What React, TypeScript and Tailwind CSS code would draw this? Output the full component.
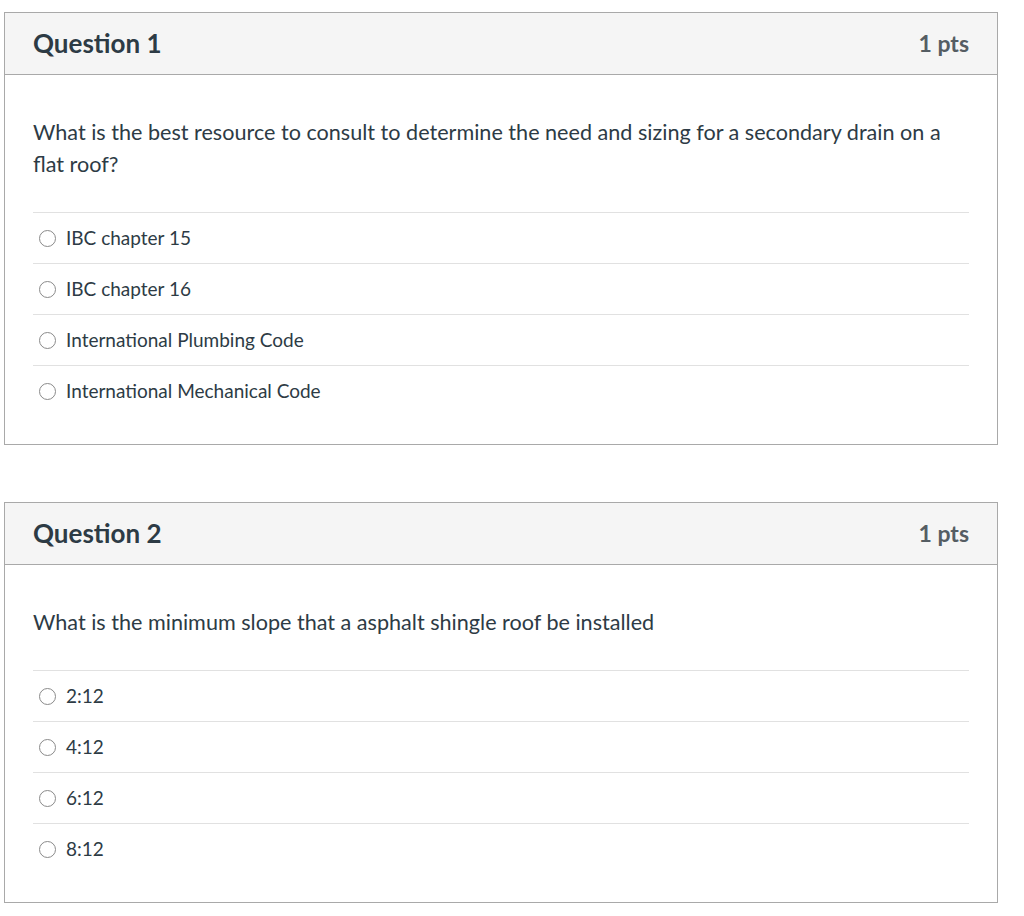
const questions = [
  {
    title: 'Question 1',
    points: '1 pts',
    text: 'What is the best resource to consult to determine the need and sizing for a secondary drain on a flat roof?',
    answers: ['IBC chapter 15', 'IBC chapter 16', 'International Plumbing Code', 'International Mechanical Code'],
  },
  {
    title: 'Question 2',
    points: '1 pts',
    text: 'What is the minimum slope that a asphalt shingle roof be installed',
    answers: ['2:12', '4:12', '6:12', '8:12'],
  },
]

function QuestionCard({ q }: { q: (typeof questions)[number] }) {
  return (
    <div className="border border-[#a9a9a9] bg-white">
      {/* Header */}
      <div className="flex h-[62px] items-center justify-between border-b border-[#a9a9a9] bg-[#f5f5f5] pl-[28px] pr-[28px]">
        <h2 className="text-[26px] font-bold text-[#2d3b45]">{q.title}</h2>
        <span className="text-[23px] font-bold text-[#555d63]">{q.points}</span>
      </div>

      {/* Body */}
      <div className="px-[28px] pt-[41px] pb-[28px]">
        <p className="text-[21.6px] leading-[32px] text-[#2d3b45]">{q.text}</p>
        <div className="mt-[32px]">
          {q.answers.map((a) => (
            <div key={a} className="flex h-[51px] items-center border-t border-[#e1e1e1] pl-[6px]">
              <span className="h-[17px] w-[17px] rounded-full border border-[#8a8a8a]" />
              <span className="ml-[10px] text-[19px] text-[#2d3b45]">{a}</span>
            </div>
          ))}
        </div>
      </div>
    </div>
  )
}

export default function App() {
  return (
    <div className="min-h-[916px] bg-white px-[4px] pt-[12px] font-['Lato',sans-serif]" style={{ width: 1002 }}>
      <div className="flex flex-col gap-[57px]">
        {questions.map((q) => (
          <QuestionCard key={q.title} q={q} />
        ))}
      </div>
    </div>
  )
}
